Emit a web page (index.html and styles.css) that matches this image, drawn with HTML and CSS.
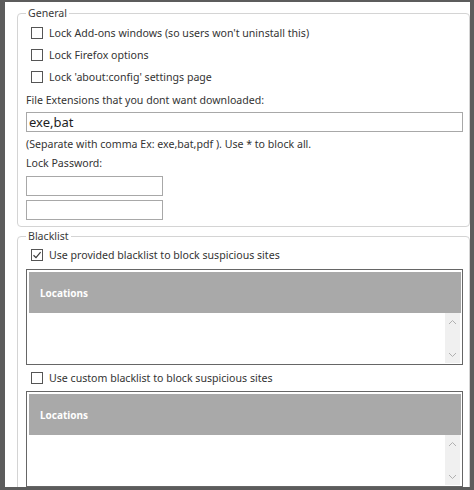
FILE: index.html
```html
<!DOCTYPE html>
<html>
<head>
<meta charset="utf-8">
<link rel="stylesheet" href="styles.css">
</head>
<body>
<div class="window">
  <fieldset class="group group-general">
    <legend>General</legend>
    <div class="check-row"><span class="box"></span><span>Lock Add-ons windows (so users won't uninstall this)</span></div>
    <div class="check-row"><span class="box"></span><span>Lock Firefox options</span></div>
    <div class="check-row"><span class="box"></span><span>Lock 'about:config' settings page</span></div>
    <div class="label label-ext">File Extensions that you dont want downloaded:</div>
    <div class="textbox wide">exe,bat</div>
    <div class="label label-sep">(Separate with comma Ex: exe,bat,pdf ). Use * to block all.</div>
    <div class="label label-pw">Lock Password:</div>
    <div class="textbox pw pw1"></div>
    <div class="textbox pw pw2"></div>
  </fieldset>
  <fieldset class="group group-black">
    <legend>Blacklist</legend>
    <div class="check-row first"><span class="box checked"><svg width="10" height="10" viewBox="0 0 10 10"><path d="M1.5 5.2 L4 7.6 L8.6 2.2" fill="none" stroke="#3a3a3a" stroke-width="1.2"/></svg></span><span>Use provided blacklist to block suspicious sites</span></div>
    <div class="listbox lb1">
      <div class="lb-head">Locations</div>
      <div class="lb-body">
        <div class="lb-items"></div>
        <div class="scrollbar">
          <svg width="9" height="6" viewBox="0 0 9 6"><path d="M1 5 L4.5 1.5 L8 5" fill="none" stroke="#b0b0b0" stroke-width="1"/></svg>
          <svg width="9" height="6" viewBox="0 0 9 6"><path d="M1 1 L4.5 4.5 L8 1" fill="none" stroke="#b0b0b0" stroke-width="1"/></svg>
        </div>
      </div>
    </div>
    <div class="check-row second"><span class="box"></span><span>Use custom blacklist to block suspicious sites</span></div>
    <div class="listbox lb2">
      <div class="lb-head">Locations</div>
      <div class="lb-body">
        <div class="lb-items"></div>
        <div class="scrollbar">
          <svg width="9" height="6" viewBox="0 0 9 6"><path d="M1 5 L4.5 1.5 L8 5" fill="none" stroke="#b0b0b0" stroke-width="1"/></svg>
          <svg width="9" height="6" viewBox="0 0 9 6"><path d="M1 1 L4.5 4.5 L8 1" fill="none" stroke="#b0b0b0" stroke-width="1"/></svg>
        </div>
      </div>
    </div>
  </fieldset>
</div>
</body>
</html>
```

FILE: styles.css
```css
html, body {
  margin: 0;
  padding: 0;
  background: #ffffff;
}
body {
  font-family: "Noto Sans", "Open Sans", sans-serif;
  font-size: 10.6px;
  color: #333333;
}
.window {
  box-sizing: border-box;
  width: 474px;
  height: 490px;
  border-style: solid;
  border-color: #5c5c5c;
  border-width: 2px 4px 3px 5px;
  background: #ffffff;
  overflow: hidden;
}
.group {
  margin: 0 0 0 12px;
  padding: 0 6px 6px 8px;
  border: 1px solid #d4d4d4;
  border-radius: 4px;
  min-width: 0;
}
.group-general {
  margin-top: 4px;
}
.group-black {
  margin-top: 2px;
}
legend {
  padding: 0 2px;
  margin-left: 0;
  line-height: 14px;
  height: 14px;
  color: #3a3a3a;
}
.check-row {
  display: flex;
  align-items: center;
  height: 22px;
  padding-left: 5px;
  gap: 6px;
  white-space: nowrap;
}
.group-general .check-row:first-of-type {
  margin-top: 2px;
}
.box {
  box-sizing: border-box;
  width: 12px;
  height: 12px;
  border: 1px solid #555555;
  background: #ffffff;
  display: flex;
  align-items: center;
  justify-content: center;
  flex: none;
}
.label {
  line-height: 16px;
  white-space: nowrap;
}
.label-ext { margin-top: 4px; }
.label-sep { margin-top: 4px; }
.label-pw { margin-top: 3px; }
.textbox {
  box-sizing: border-box;
  height: 20px;
  border: 1px solid #a8a8a8;
  background: #ffffff;
}
.wide {
  margin-top: 4px;
  font-size: 13px;
  line-height: 18px;
  padding-left: 2px;
  color: #1e1e1e;
}
.pw {
  width: 137px;
}
.pw1 { margin-top: 5px; }
.pw2 { margin-top: 4px; }
.check-row.first { margin-top: 1px; }
.check-row.second { margin-top: 2px; }
.listbox {
  box-sizing: border-box;
  height: 96px;
  border: 1px solid #666666;
  padding: 2px 1px 1px 2px;
  display: flex;
  flex-direction: column;
  background: #ffffff;
}
.lb1 { margin-top: 3px; }
.lb2 { margin-top: 2px; }
.lb-head {
  height: 41px;
  flex: none;
  background: #a9a9a9;
  color: #ffffff;
  font-weight: bold;
  font-size: 10px;
  display: flex;
  align-items: center;
  padding-left: 11px;
}
.lb-body {
  flex: 1;
  display: flex;
}
.lb-items {
  flex: 1;
}
.scrollbar {
  width: 15px;
  margin-right: 1px;
  background: #f0f0f0;
  display: flex;
  flex-direction: column;
  justify-content: space-between;
  align-items: center;
  padding: 6px 0 5px;
}
```
